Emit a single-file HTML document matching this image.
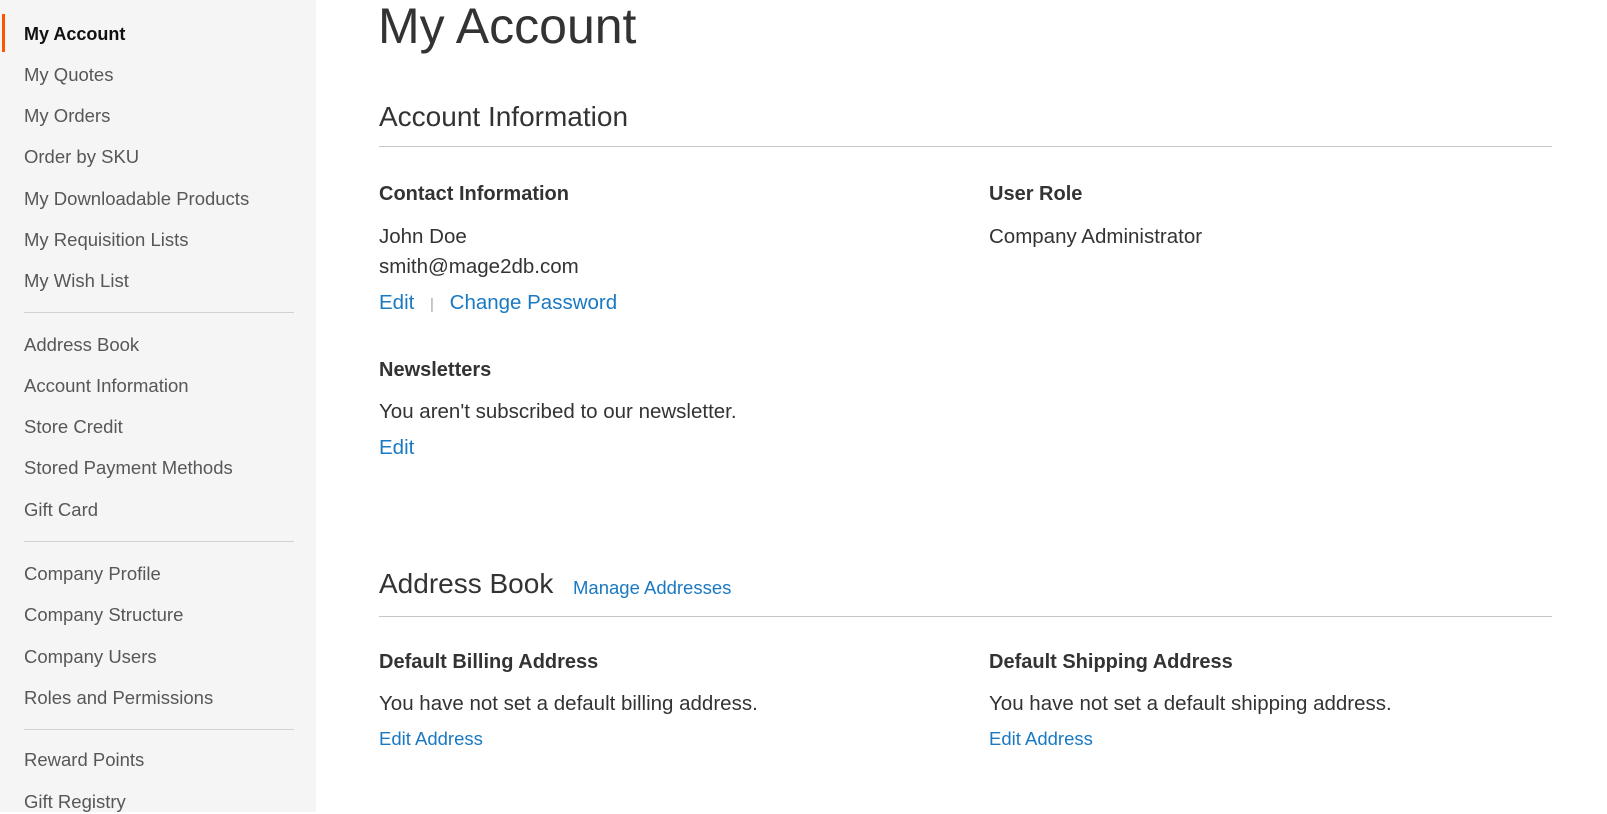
<!DOCTYPE html>
<html><head><meta charset="utf-8"><style>
*{margin:0;padding:0;box-sizing:border-box}
body{width:1607px;height:812px;overflow:hidden;background:#fff;font-family:"Liberation Sans",sans-serif;color:#333;position:relative}
.side{position:absolute;left:0;top:0;width:316px;height:812px;background:#f5f5f5}
.side div{position:absolute;left:24px;font-size:18.5px;color:#575757;line-height:24px;transform:translateY(-12px)}
.side .act{color:#111;font-weight:bold;font-size:18px}
.bar{position:absolute;left:2px;top:14px;width:3px;height:38px;background:#ff5501}
.sep{position:absolute;left:24px;width:270px;height:1px;background:#d1d1d1}
.t{position:absolute;line-height:1;white-space:nowrap;transform:translateY(-50%)}
a{color:#1979c3;text-decoration:none}
.b{font-weight:bold;font-size:20px;color:#333}
.n{font-size:20.5px;color:#333}
.l{font-size:20.5px;color:#1979c3}
.hr{position:absolute;left:379px;width:1173px;height:1px;background:#c6c6c6}
</style></head><body>
<div class="side">
<span class="bar"></span>
<div class="act" style="top:34px">My Account</div>
<div style="top:75px">My Quotes</div>
<div style="top:116px">My Orders</div>
<div style="top:157px">Order by SKU</div>
<div style="top:199px">My Downloadable Products</div>
<div style="top:240px">My Requisition Lists</div>
<div style="top:281px">My Wish List</div>
<span class="sep" style="top:312px"></span>
<div style="top:345px">Address Book</div>
<div style="top:386px">Account Information</div>
<div style="top:427px">Store Credit</div>
<div style="top:468px">Stored Payment Methods</div>
<div style="top:510px">Gift Card</div>
<span class="sep" style="top:541px"></span>
<div style="top:574px">Company Profile</div>
<div style="top:615px">Company Structure</div>
<div style="top:657px">Company Users</div>
<div style="top:698px">Roles and Permissions</div>
<span class="sep" style="top:729px"></span>
<div style="top:760px">Reward Points</div>
<div style="top:802px">Gift Registry</div>
</div>

<div class="t" style="left:378px;top:26px;font-size:50px;color:#333;font-weight:300">My Account</div>
<div class="t" style="left:379px;top:117px;font-size:28px;font-weight:300">Account Information</div>
<div class="hr" style="top:146px"></div>

<div class="t b" style="left:379px;top:194px">Contact Information</div>
<div class="t n" style="left:379px;top:237px">John Doe</div>
<div class="t n" style="left:379px;top:267px">smith@mage2db.com</div>
<div class="t l" style="left:379px;top:303px">Edit <span style="color:#a6a6a6;font-size:15px;margin:0 10px">|</span> Change Password</div>
<div class="t b" style="left:989px;top:194px">User Role</div>
<div class="t n" style="left:989px;top:237px">Company Administrator</div>

<div class="t b" style="left:379px;top:370px">Newsletters</div>
<div class="t n" style="left:379px;top:412px">You aren't subscribed to our newsletter.</div>
<div class="t l" style="left:379px;top:448px">Edit</div>

<div class="t" style="left:379px;top:584px;font-size:28px;font-weight:300">Address Book</div>
<div class="t" style="left:573px;top:588px;font-size:18.5px;color:#1979c3">Manage Addresses</div>
<div class="hr" style="top:616px"></div>

<div class="t b" style="left:379px;top:662px">Default Billing Address</div>
<div class="t n" style="left:379px;top:704px">You have not set a default billing address.</div>
<div class="t" style="left:379px;top:739px;font-size:18.5px;color:#1979c3">Edit Address</div>
<div class="t b" style="left:989px;top:662px">Default Shipping Address</div>
<div class="t n" style="left:989px;top:704px">You have not set a default shipping address.</div>
<div class="t" style="left:989px;top:739px;font-size:18.5px;color:#1979c3">Edit Address</div>
</body></html>
